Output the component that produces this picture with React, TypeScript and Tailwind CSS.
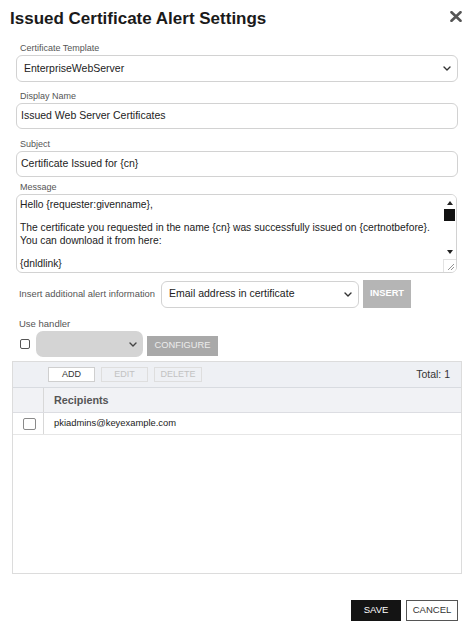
import React from "react";

function Chevron({ color = "#333" }: { color?: string }) {
  return (
    <svg width="8" height="5" viewBox="0 0 8 5" className="shrink-0">
      <polyline points="1,1 4,4 7,1" fill="none" stroke={color} strokeWidth="1.4" strokeLinecap="round" strokeLinejoin="round" />
    </svg>
  );
}

function Label({ children, className = "" }: { children: React.ReactNode; className?: string }) {
  return (
    <div className={`h-[12px] leading-[12px] text-[9px] text-[#555] pl-[4px] mb-[1px] ${className}`}>{children}</div>
  );
}

export default function App() {
  return (
    <div className="w-[474px] h-[632px] bg-white font-['Liberation_Sans',Arial,sans-serif] text-[#222] flex flex-col overflow-hidden">
      {/* Header */}
      <div className="flex items-start justify-between pl-[10px] pr-[12px] pt-[8px]">
        <div className="text-[17px] leading-[21px] font-bold text-[#1a1a1a]">Issued Certificate Alert Settings</div>
        <svg width="12" height="11" viewBox="0 0 12 11" className="mt-[3px]">
          <path d="M1.5 1.2 L10.5 9.8 M10.5 1.2 L1.5 9.8" stroke="#555" strokeWidth="2.6" strokeLinecap="round" />
        </svg>
      </div>

      <div className="px-[16px] flex flex-col">
        {/* Certificate Template */}
        <Label className="mt-[13px]">Certificate Template</Label>
        <div className="h-[27px] border border-[#d2d2d2] rounded-[6px] flex items-center justify-between pl-[7px] pr-[6px] text-[10.5px]">
          <span>EnterpriseWebServer</span>
          <Chevron />
        </div>

        {/* Display Name */}
        <Label className="mt-[8px]">Display Name</Label>
        <div className="h-[26px] border border-[#d2d2d2] rounded-[6px] flex items-center pl-[4px] text-[10.5px]">
          Issued Web Server Certificates
        </div>

        {/* Subject */}
        <Label className="mt-[9px]">Subject</Label>
        <div className="h-[26px] border border-[#d2d2d2] rounded-[6px] flex items-center pl-[4px] text-[10.5px]">
          Certificate Issued for {"{cn}"}
        </div>

        {/* Message */}
        <Label className="mt-[4px]">Message</Label>
        <div className="relative h-[79px] border border-[#d2d2d2] rounded-[6px] overflow-hidden text-[10.3px] w-[441px]">
          <div className="pl-[3px] pt-[3px] whitespace-nowrap leading-[13px]">
            <div>Hello {"{requester:givenname}"},</div>
            <div className="h-[10px]" />
            <div>The certificate you requested in the name {"{cn}"} was successfully issued on {"{certnotbefore}"}.</div>
            <div>You can download it from here:</div>
            <div className="h-[10px]" />
            <div>{"{dnldlink}"}</div>
          </div>
          {/* scrollbar */}
          <div className="absolute right-0 top-0 bottom-0 w-[13px] bg-white flex flex-col items-center">
            <svg width="6" height="4" viewBox="0 0 6 4" className="mt-[6px]">
              <polygon points="0,4 3,0 6,4" fill="#222" />
            </svg>
            <div className="w-[11px] h-[12px] bg-[#111] mt-[4px]" />
            <div className="flex-1" />
            <svg width="6" height="4" viewBox="0 0 6 4" className="mb-[5px]">
              <polygon points="0,0 3,4 6,0" fill="#222" />
            </svg>
            <div className="w-[13px] h-[13px] border-t border-l border-[#e3e3e3] bg-white flex items-end justify-end">
              <svg width="8" height="8" viewBox="0 0 8 8" className="mr-[1px] mb-[1px]">
                <path d="M1 7 L7 1 M4 7 L7 4" stroke="#888" strokeWidth="0.9" />
              </svg>
            </div>
          </div>
        </div>

        {/* Insert row */}
        <div className="mt-[7px] h-[28px] flex items-center">
          <span className="text-[9.4px] text-[#555] pl-[3px] w-[145px]">Insert additional alert information</span>
          <div className="h-[27px] w-[198px] border border-[#d2d2d2] rounded-[6px] flex items-center justify-between pl-[7px] pr-[6px] text-[10.5px]">
            <span>Email address in certificate</span>
            <Chevron />
          </div>
          <div className="ml-[4px] h-[28px] w-[48px] bg-[#b5b5b5] text-white font-bold text-[9.3px] flex items-center justify-center">
            INSERT
          </div>
        </div>

        {/* Use handler */}
        <div className="mt-[10px] h-[12px] leading-[12px] text-[9.5px] text-[#555] pl-[3px]">Use handler</div>
        <div className="mt-[1px] h-[26px] flex items-center">
          <div className="ml-[4px] w-[10px] h-[10px] border-[1.5px] border-[#555] rounded-[2px]" />
          <div className="ml-[6px] h-[26px] w-[107px] bg-[#d4d4d4] rounded-[7px] flex items-center justify-end pr-[6px]">
            <Chevron color="#444" />
          </div>
          <div className="ml-[4px] self-end mb-[1px] h-[20px] w-[71px] bg-[#a9a9a9] text-[#ececec] text-[9.3px] flex items-center justify-center">
            CONFIGURE
          </div>
        </div>

        {/* Grid */}
        <div className="mt-[4px] -mx-[4px] h-[213px] border border-[#dcdcdc] flex flex-col">
          <div className="h-[26px] bg-[#eef0f4] border-b border-[#d8dbe0] flex items-center pl-[35px] pr-[11px] gap-[6px]">
            <div className="h-[15px] w-[47px] bg-white border border-[#cfcfcf] text-[9px] text-[#333] flex items-center justify-center">ADD</div>
            <div className="h-[15px] w-[47px] border border-[#dedede] text-[9px] text-[#c2c2c2] flex items-center justify-center">EDIT</div>
            <div className="h-[15px] w-[48px] border border-[#dedede] text-[9px] text-[#c2c2c2] flex items-center justify-center">DELETE</div>
            <div className="flex-1" />
            <div className="text-[10.5px] text-[#333]">Total: 1</div>
          </div>
          <div className="h-[25px] bg-[#f1f2f5] border-b border-[#dcdde2] flex">
            <div className="w-[31px] border-r border-[#d8d8d8]" />
            <div className="flex items-center pl-[10px] text-[10.8px] font-bold text-[#555]">Recipients</div>
          </div>
          <div className="h-[22px] border-b border-[#e6e6e6] flex">
            <div className="w-[31px] border-r border-[#d8d8d8] flex items-center justify-center">
              <div className="w-[13px] h-[12px] border border-[#8a8a8a] rounded-[2px] ml-[2px]" />
            </div>
            <div className="flex items-center pl-[10px] text-[9.4px] text-[#222]">pkiadmins@keyexample.com</div>
          </div>
        </div>

        {/* Footer */}
        <div className="mt-[26px] flex justify-end gap-[5px]">
          <div className="h-[21px] w-[50px] bg-[#141414] text-white text-[9.5px] flex items-center justify-center">SAVE</div>
          <div className="h-[21px] w-[52px] bg-white border border-[#555] text-[#333] text-[9.5px] flex items-center justify-center">CANCEL</div>
        </div>
      </div>
    </div>
  );
}
